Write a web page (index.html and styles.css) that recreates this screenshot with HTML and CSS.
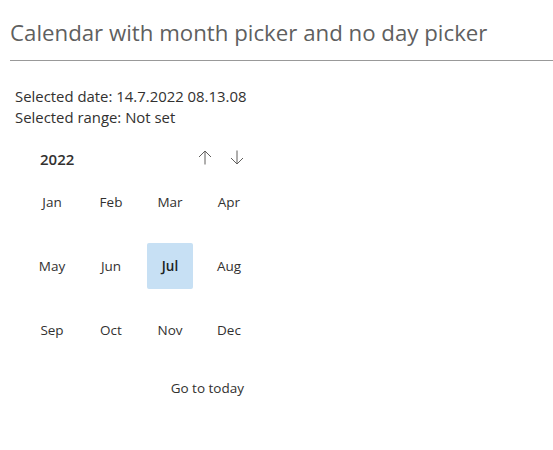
FILE: index.html
```html
<!DOCTYPE html>
<html>
<head>
<meta charset="utf-8">
<link rel="stylesheet" href="styles.css">
</head>
<body>
<header class="page-header">
  <h1 class="title">Calendar with month picker and no day picker</h1>
</header>
<main class="content">
  <div class="info">
    <div>Selected date: 14.7.2022 08.13.08</div>
    <div>Selected range: Not set</div>
  </div>
  <div class="calendar">
    <div class="cal-header">
      <span class="year">2022</span>
      <div class="nav">
        <button class="nav-btn" aria-label="Previous year">
          <svg width="14" height="15" viewBox="0 0 14 15"><path d="M7 14.5V1M1 7L7 1L13 7" fill="none" stroke="#605e5c" stroke-width="1"/></svg>
        </button>
        <button class="nav-btn" aria-label="Next year">
          <svg width="14" height="15" viewBox="0 0 14 15"><path d="M7 0.5V14M1 8L7 14L13 8" fill="none" stroke="#605e5c" stroke-width="1"/></svg>
        </button>
      </div>
    </div>
    <div class="months">
      <button class="month">Jan</button>
      <button class="month">Feb</button>
      <button class="month">Mar</button>
      <button class="month">Apr</button>
      <button class="month">May</button>
      <button class="month">Jun</button>
      <button class="month selected">Jul</button>
      <button class="month">Aug</button>
      <button class="month">Sep</button>
      <button class="month">Oct</button>
      <button class="month">Nov</button>
      <button class="month">Dec</button>
    </div>
    <div class="footer">
      <button class="today">Go to today</button>
    </div>
  </div>
</main>
</body>
</html>
```

FILE: styles.css
```css
* { box-sizing: border-box; }
body {
  margin: 0;
  font-family: "Open Sans", "Noto Sans", sans-serif;
  color: #323130;
  background: #fff;
}
.page-header {
  margin-left: 10px;
  border-bottom: 1px solid #999;
  height: 61px;
  padding-top: 18px;
}
.title {
  margin: 0;
  font-size: 22.25px;
  font-weight: 400;
  line-height: 30px;
  color: #5f5f5f;
}
.content {
  padding: 25px 0 0 15px;
}
.info {
  font-size: 14.9px;
  line-height: 21px;
}
.calendar {
  margin-left: 14px;
  width: 224px;
  margin-top: 21px;
}
.cal-header {
  display: flex;
  justify-content: space-between;
  align-items: center;
  height: 20px;
  padding-left: 11px;
  padding-right: 8px;
}
.year {
  font-size: 15px;
  font-weight: 600;
}
.nav { display: flex; gap: 18px; margin-top: -4px; margin-right: 1px; }
.nav-btn {
  border: 0;
  background: none;
  padding: 0;
  width: 14px;
  height: 15px;
  display: flex;
}
.months {
  margin-top: 10px;
  display: grid;
  grid-template-columns: repeat(4, 46px);
  grid-auto-rows: 46px;
  column-gap: 13px;
  row-gap: 18px;
}
.month {
  border: 0;
  background: none;
  font-family: inherit;
  font-size: 13.5px;
  color: #323130;
  padding: 0;
  border-radius: 2px;
}
.month.selected {
  background: #c7e0f4;
  font-weight: 600;
  color: #201f1e;
}
.footer {
  display: flex;
  justify-content: flex-end;
  margin-top: 25px;
  padding-right: 9px;
}
.today {
  border: 0;
  background: none;
  padding: 0;
  font-family: inherit;
  font-size: 13.5px;
  color: #323130;
  line-height: 20px;
}
```
